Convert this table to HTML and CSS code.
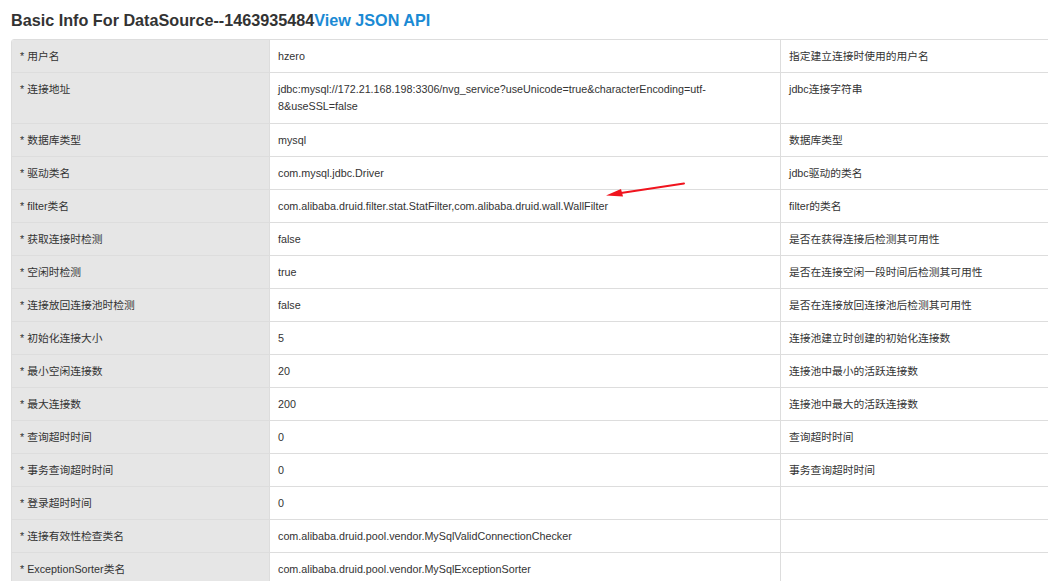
FILE: index.html
```html
<!DOCTYPE html>
<html>
<head>
<meta charset="utf-8">
<link rel="stylesheet" href="styles.css">
</head>
<body>
<div class="page">
  <h3 class="title">Basic Info For DataSource--1463935484<a class="api" href="#">View JSON API</a></h3>
  <div class="wrap">
    <table class="info">
      <tbody>
        <tr><td class="k">* 用户名</td><td class="v">hzero</td><td class="d">指定建立连接时使用的用户名</td></tr>
        <tr class="tall"><td class="k">* 连接地址</td><td class="v">jdbc:mysql://172.21.168.198:3306/nvg_service?useUnicode=true&amp;characterEncoding=utf-<br>8&amp;useSSL=false</td><td class="d">jdbc连接字符串</td></tr>
        <tr><td class="k">* 数据库类型</td><td class="v">mysql</td><td class="d">数据库类型</td></tr>
        <tr><td class="k">* 驱动类名</td><td class="v">com.mysql.jdbc.Driver</td><td class="d">jdbc驱动的类名</td></tr>
        <tr><td class="k">* filter类名</td><td class="v arrowcell">com.alibaba.druid.filter.stat.StatFilter,com.alibaba.druid.wall.WallFilter<svg class="arrow" width="82" height="20" viewBox="0 0 82 20"><path d="M16 11 L79 1.5" stroke="#f0141e" stroke-width="2" fill="none" stroke-linecap="round"/><path d="M1 13.5 L16 7 L18 14.5 Z" fill="#f0141e"/></svg></td><td class="d">filter的类名</td></tr>
        <tr><td class="k">* 获取连接时检测</td><td class="v">false</td><td class="d">是否在获得连接后检测其可用性</td></tr>
        <tr><td class="k">* 空闲时检测</td><td class="v">true</td><td class="d">是否在连接空闲一段时间后检测其可用性</td></tr>
        <tr><td class="k">* 连接放回连接池时检测</td><td class="v">false</td><td class="d">是否在连接放回连接池后检测其可用性</td></tr>
        <tr><td class="k">* 初始化连接大小</td><td class="v">5</td><td class="d">连接池建立时创建的初始化连接数</td></tr>
        <tr><td class="k">* 最小空闲连接数</td><td class="v">20</td><td class="d">连接池中最小的活跃连接数</td></tr>
        <tr><td class="k">* 最大连接数</td><td class="v">200</td><td class="d">连接池中最大的活跃连接数</td></tr>
        <tr><td class="k">* 查询超时时间</td><td class="v">0</td><td class="d">查询超时时间</td></tr>
        <tr><td class="k">* 事务查询超时时间</td><td class="v">0</td><td class="d">事务查询超时时间</td></tr>
        <tr><td class="k">* 登录超时时间</td><td class="v">0</td><td class="d"></td></tr>
        <tr><td class="k">* 连接有效性检查类名</td><td class="v">com.alibaba.druid.pool.vendor.MySqlValidConnectionChecker</td><td class="d"></td></tr>
        <tr><td class="k">* ExceptionSorter类名</td><td class="v">com.alibaba.druid.pool.vendor.MySqlExceptionSorter</td><td class="d"></td></tr>
      </tbody>
    </table>
  </div>
</div>
</body>
</html>
```

FILE: styles.css
```css
html, body {
  margin: 0;
  padding: 0;
  background: #fff;
  overflow: hidden;
}
body {
  font-family: "Liberation Sans", Arial, "Noto Sans CJK SC", sans-serif;
  color: #333;
}
.page {
  padding: 0 0 0 11px;
  width: 1080px;
}
.title {
  margin: 0;
  padding-top: 10px;
  height: 29px;
  font-size: 16.2px;
  font-weight: bold;
  line-height: 21px;
  color: #333;
}
.api {
  color: #1a8ad4;
  text-decoration: none;
}
.wrap {
  border: 1px solid #ddd;
  border-radius: 3px 0 0 0;
  overflow: hidden;
  width: 1060px;
}
.info {
  border-collapse: collapse;
  width: 100%;
  table-layout: fixed;
  font-size: 10.75px;
  line-height: 17px;
}
.info td {
  border-top: 1px solid #ddd;
  padding: 8px 8px 7px 8px;
  vertical-align: top;
  font-family: "Liberation Sans", Arial, "Noto Sans CJK SC", sans-serif;
}
.info tr.tall td {
  padding-bottom: 8px;
}
.info tr:first-child td {
  border-top: none;
}
.info td.k {
  width: 241px;
  background: #e6e6e6;
  border-right: 1px solid #ddd;
}
.info td.v {
  width: 494px;
  border-right: 1px solid #ddd;
}
.arrowcell {
  position: relative;
}
.arrow {
  position: absolute;
  left: 335px;
  top: -8px;
}
```
